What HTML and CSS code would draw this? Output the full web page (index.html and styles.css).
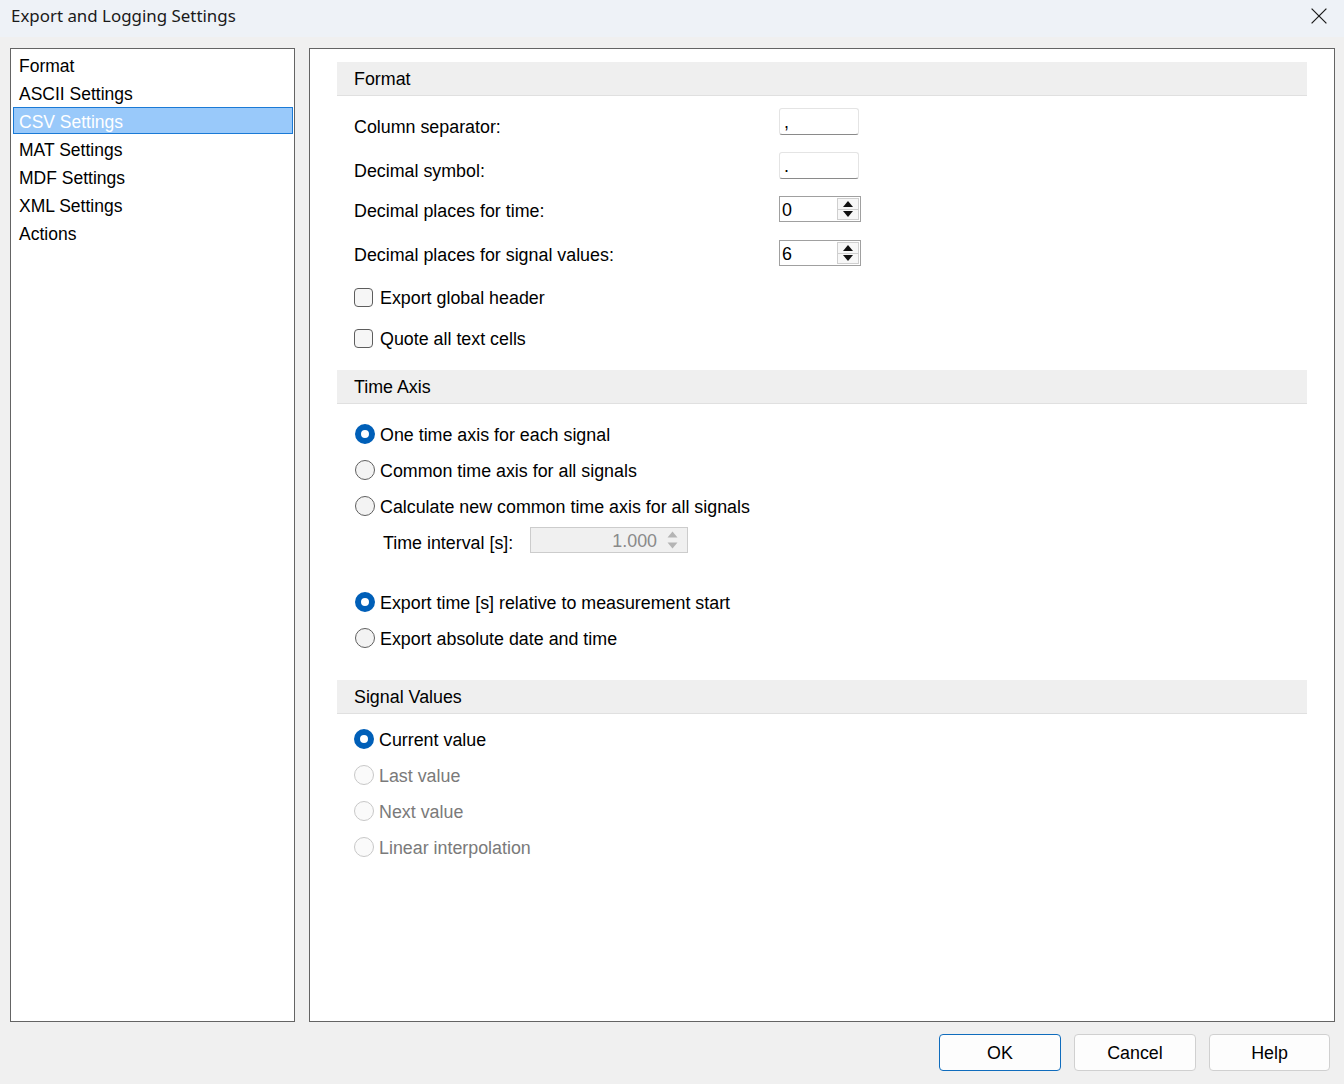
FILE: index.html
```html
<!DOCTYPE html>
<html lang="en">
<head>
<meta charset="utf-8">
<title>Export and Logging Settings</title>
<link rel="stylesheet" href="styles.css">
</head>
<body>
<div class="window">
  <header class="titlebar">
    <span class="title">Export and Logging Settings</span>
    <span class="close" aria-label="Close">
      <svg width="16" height="16" viewBox="0 0 16 16"><path d="M0.6 0.6 L15.4 15.4 M15.4 0.6 L0.6 15.4" stroke="#1b1b1b" stroke-width="1.25" fill="none"/></svg>
    </span>
  </header>

  <main class="content">
    <ul class="nav">
      <li>Format</li>
      <li>ASCII Settings</li>
      <li class="selected">CSV Settings</li>
      <li>MAT Settings</li>
      <li>MDF Settings</li>
      <li>XML Settings</li>
      <li>Actions</li>
    </ul>

    <section class="panel">
      <div class="group-head">Format</div>
      <div class="fields">
        <div class="field field-text"><span class="flabel">Column separator:</span><span class="textbox">,</span></div>
        <div class="field field-text"><span class="flabel">Decimal symbol:</span><span class="textbox">.</span></div>
        <div class="field field-spin"><span class="flabel">Decimal places for time:</span>
          <span class="spin"><span class="spin-val">0</span><span class="spin-btns"><span class="sb"><svg width="10" height="6" viewBox="0 0 10 6"><path d="M5 0 L10 6 L0 6 Z" fill="#111"/></svg></span><span class="sb"><svg width="10" height="6" viewBox="0 0 10 6"><path d="M0 0 L10 0 L5 6 Z" fill="#111"/></svg></span></span></span>
        </div>
        <div class="field field-spin"><span class="flabel">Decimal places for signal values:</span>
          <span class="spin"><span class="spin-val">6</span><span class="spin-btns"><span class="sb"><svg width="10" height="6" viewBox="0 0 10 6"><path d="M5 0 L10 6 L0 6 Z" fill="#111"/></svg></span><span class="sb"><svg width="10" height="6" viewBox="0 0 10 6"><path d="M0 0 L10 0 L5 6 Z" fill="#111"/></svg></span></span></span>
        </div>
      </div>
      <div class="checks">
        <div class="check-row"><span class="checkbox"></span><span class="txt">Export global header</span></div>
        <div class="check-row"><span class="checkbox"></span><span class="txt">Quote all text cells</span></div>
      </div>

      <div class="group-head gh-time">Time Axis</div>
      <div class="radios radios-time">
        <div class="radio-row"><span class="radio checked"></span><span class="txt">One time axis for each signal</span></div>
        <div class="radio-row"><span class="radio"></span><span class="txt">Common time axis for all signals</span></div>
        <div class="radio-row"><span class="radio"></span><span class="txt">Calculate new common time axis for all signals</span></div>
        <div class="interval-row"><span class="ilabel">Time interval [s]:</span>
          <span class="dspin"><span class="dspin-val">1.000</span><span class="dspin-btns"><svg width="11" height="7" viewBox="0 0 11 7"><path d="M5.5 0.5 L10.5 6.5 L0.5 6.5 Z" fill="#b4b4b4"/></svg><svg width="11" height="7" viewBox="0 0 11 7"><path d="M0.5 0.5 L10.5 0.5 L5.5 6.5 Z" fill="#b4b4b4"/></svg></span></span>
        </div>
      </div>
      <div class="radios radios-export">
        <div class="radio-row"><span class="radio checked"></span><span class="txt">Export time [s] relative to measurement start</span></div>
        <div class="radio-row"><span class="radio"></span><span class="txt">Export absolute date and time</span></div>
      </div>

      <div class="group-head gh-signal">Signal Values</div>
      <div class="radios radios-signal">
        <div class="radio-row"><span class="radio checked"></span><span class="txt">Current value</span></div>
        <div class="radio-row disabled"><span class="radio"></span><span class="txt">Last value</span></div>
        <div class="radio-row disabled"><span class="radio"></span><span class="txt">Next value</span></div>
        <div class="radio-row disabled"><span class="radio"></span><span class="txt">Linear interpolation</span></div>
      </div>
    </section>
  </main>

  <footer class="footer">
    <button class="btn btn-default">OK</button>
    <button class="btn">Cancel</button>
    <button class="btn btn-help">Help</button>
  </footer>
</div>
</body>
</html>
```

FILE: styles.css
```css
* { box-sizing: border-box; }
html, body { margin: 0; padding: 0; }
body {
  width: 1344px;
  height: 1084px;
  overflow: hidden;
  background: #f0f0f0;
  font-family: "Liberation Sans", Arial, sans-serif;
  font-size: 17.85px;
  color: #000;
}
.window {
  width: 1344px;
  height: 1084px;
  display: flex;
  flex-direction: column;
  background: #f0f0f0;
}

/* title bar */
.titlebar {
  flex: none;
  height: 37px;
  background: #eef2f7;
  display: flex;
  align-items: center;
  justify-content: space-between;
  padding: 0 17px 6px 11px;
}
.title {
  font-family: "Noto Sans", "Open Sans", sans-serif;
  font-size: 16.9px;
  color: #1a1a1a;
}
.close { display: block; width: 16px; height: 16px; margin-top: 1px; }
.close svg { display: block; }

/* content */
.content {
  flex: none;
  height: 985px;
  padding: 11px 9px 0 10px;
  display: flex;
  gap: 14px;
}
.nav {
  flex: none;
  width: 285px;
  height: 974px;
  margin: 0;
  padding: 2px 1px 0 2px;
  list-style: none;
  background: #fff;
  border: 1px solid #646464;
  font-size: 17.5px;
}
.nav li {
  height: 27px;
  margin-bottom: 1px;
  padding: 2px 0 0 5px;
  line-height: 25px;
  border: 1px solid transparent;
  white-space: nowrap;
  overflow: hidden;
}
.nav li.selected {
  background: #99c9fa;
  border-color: #1a7ad6;
  color: #fff;
}

.panel {
  flex: none;
  width: 1026px;
  height: 974px;
  background: #fff;
  border: 1px solid #646464;
  padding: 13px 27px;
}
.group-head {
  height: 34px;
  padding: 2px 0 0 17px;
  line-height: 31px;
  background: #efefef;
  border-bottom: 1px solid #e0e0e0;
}
.gh-time { margin-top: 11px; }
.gh-signal { margin-top: 24px; }

/* format fields */
.fields { margin-top: 8px; }
.field {
  height: 44px;
  display: flex;
  align-items: flex-start;
}
.field:last-child { height: 41px; }
.flabel {
  width: 442px;
  padding-left: 17px;
  line-height: 28px;
  white-space: nowrap;
}
.field-text .flabel { margin-top: 9px; }
.field-spin .flabel { margin-top: 5px; }
.textbox {
  margin-top: 4px;
  width: 80px;
  height: 27px;
  border: 1px solid #e4e4e4;
  border-bottom-color: #8a8a8a;
  border-radius: 3px;
  padding-left: 4px;
  line-height: 26px;
  background: #fff;
}
.spin {
  margin-top: 4px;
  width: 82px;
  height: 26px;
  border: 1px solid #a0a0a0;
  display: flex;
  background: #fff;
}
.spin-val {
  flex: 1;
  padding: 1px 0 0 2px;
  line-height: 24px;
}
.spin-btns {
  width: 22px;
  margin: 1px 1px 1px 0;
  display: flex;
  flex-direction: column;
  border: 1px solid #cfcfcf;
  background: #f7f7f7;
}
.sb {
  flex: 1;
  display: flex;
  align-items: center;
  justify-content: center;
}
.sb + .sb { border-top: 1px solid #cfcfcf; }
.sb svg { display: block; }

.txt { padding-top: 2px; }

/* checkboxes */
.check-row {
  height: 41px;
  display: flex;
  align-items: center;
  gap: 7px;
  padding-left: 17px;
}
.checkbox {
  width: 19px;
  height: 19px;
  border: 1px solid #5d5d5d;
  border-radius: 4px;
  background: #f6f6f6;
}

/* radios */
.radios-time { margin-top: 12px; }
.radios-export { margin-top: 24px; }
.radios-signal { margin-top: 7px; }
.radio-row {
  height: 36px;
  display: flex;
  align-items: center;
  gap: 5px;
  padding-left: 18px;
  white-space: nowrap;
}
.radios-signal .radio-row { padding-left: 17px; }
.radio {
  flex: none;
  width: 20px;
  height: 20px;
  border-radius: 50%;
  border: 1px solid #5f5f5f;
  background: #f3f3f3;
}
.radio.checked {
  background: #fff;
  border: 6px solid #005fb8;
}
.radio-row.disabled { color: #7a7a7a; }
.radio-row.disabled .radio {
  border-color: #c8c8c8;
  background: #fafafa;
}

.interval-row {
  height: 36px;
  display: flex;
  align-items: center;
  padding-left: 46px;
}
.ilabel { width: 147px; white-space: nowrap; padding-top: 2px; }
.dspin {
  width: 158px;
  height: 26px;
  margin-top: -4px;
  border: 1px solid #cccccc;
  background: #f0f0f0;
  display: flex;
}
.dspin-val {
  flex: 1;
  text-align: right;
  padding: 1px 5px 0 0;
  line-height: 24px;
  color: #8a8a8a;
}
.dspin-btns {
  width: 20px;
  display: flex;
  flex-direction: column;
  align-items: center;
  justify-content: center;
  gap: 4px;
  margin-right: 5px;
}
.dspin-btns svg { display: block; }

/* footer */
.footer {
  flex: none;
  display: flex;
  justify-content: flex-end;
  gap: 13px;
  padding: 12px 14px 13px 0;
}
.btn {
  width: 122px;
  height: 37px;
  border: 1px solid #d0d0d0;
  border-radius: 4px;
  background: #fdfdfd;
  font-family: "Liberation Sans", Arial, sans-serif;
  font-size: 17.85px;
  color: #000;
  padding: 2px 0 0;
}
.btn-default { border-color: #0f6cbd; }
.btn-help { width: 121px; }
```
